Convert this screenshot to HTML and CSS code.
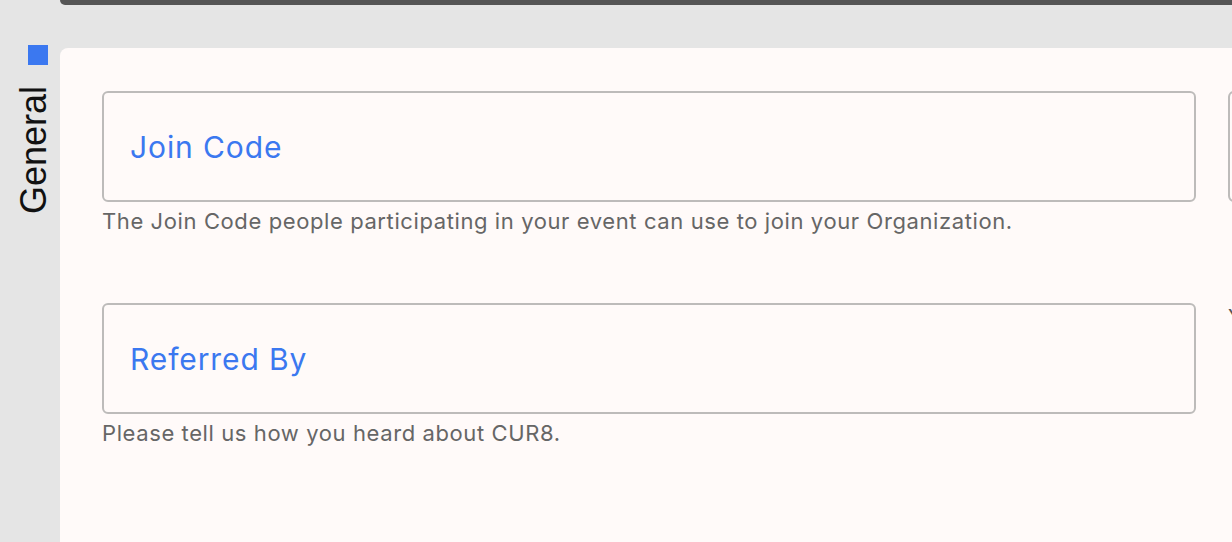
FILE: index.html
```html
<!DOCTYPE html>
<html>
<head>
<meta charset="utf-8">
<link rel="stylesheet" href="styles.css">
</head>
<body>
<div class="app">
  <aside class="side">
    <span class="marker"></span>
    <span class="side-label">General</span>
  </aside>
  <main class="main">
    <div class="topbar"></div>
    <section class="panel">
      <div class="col">
        <div class="field">
          <div class="box"><span class="label">Join Code</span></div>
          <p class="help">The Join Code people participating in your event can use to join your Organization.</p>
        </div>
        <div class="field">
          <div class="box"><span class="label">Referred By</span></div>
          <p class="help">Please tell us how you heard about CUR8.</p>
        </div>
      </div>
      <div class="col col-next">
        <div class="box box-next"></div>
        <span class="next-glyph">Y</span>
      </div>
    </section>
  </main>
</div>
</body>
</html>
```
FILE: styles.css
```css
html, body {
  margin: 0;
  padding: 0;
  height: 100%;
  overflow: hidden;
}
body {
  background: #e5e5e5;
  font-family: "Inter", "Liberation Sans", sans-serif;
}
.app {
  display: grid;
  grid-template-columns: 60px 1fr;
  height: 542px;
}
.side {
  display: flex;
  flex-direction: column;
  align-items: center;
  padding-top: 45px;
}
.marker {
  width: 20px;
  height: 20px;
  background: #3b78f0;
  margin-left: 16px;
}
.side-label {
  writing-mode: vertical-rl;
  transform: rotate(180deg);
  font-family: "Liberation Sans", sans-serif;
  font-size: 36px;
  color: #111;
  margin-top: 21px;
  margin-left: 8px;
  line-height: 1;
}
.main {
  display: flex;
  flex-direction: column;
  min-width: 0;
}
.topbar {
  height: 5px;
  background: #555555;
  border-bottom-left-radius: 6px;
}
.panel {
  margin-top: 43px;
  flex: 1;
  background: #fffaf9;
  border-top-left-radius: 8px;
  padding: 43px 0 0 42px;
  display: flex;
  gap: 32px;
  overflow: hidden;
}
.col {
  width: 1094px;
  flex: none;
}
.col-next {
  width: 200px;
  position: relative;
}
.field {
  margin-bottom: 68px;
}
.box {
  box-sizing: border-box;
  height: 111px;
  border: 2px solid #bdbbba;
  border-radius: 6px;
  display: flex;
  align-items: center;
  padding-left: 26px;
}
.label {
  font-size: 30px;
  letter-spacing: 0.9px;
  color: #3b78f0;
}
.help {
  margin: 5px 0 0;
  font-size: 22px;
  letter-spacing: 0.6px;
  color: #666;
  line-height: 28px;
}
.next-glyph {
  position: absolute;
  left: 0;
  top: 214px;
  font-size: 20px;
  color: #555;
}
```
